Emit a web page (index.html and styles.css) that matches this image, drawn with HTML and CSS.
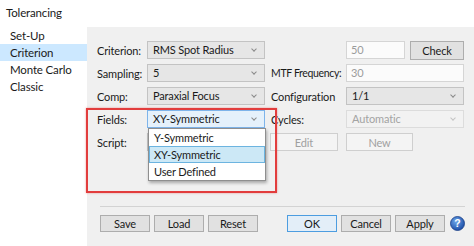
FILE: index.html
```html
<!DOCTYPE html>
<html lang="en">
<head>
    <meta charset="UTF-8">
    <meta name="viewport" content="width=device-width, initial-scale=1.0">
    <title>Tolerancing</title>
    <link rel="stylesheet" href="styles.css">
</head>
<body>
    <div class="window">
        <div class="title">Tolerancing</div>

        <div class="main">
            <ul class="nav">
                <li>Set-Up</li>
                <li class="active">Criterion</li>
                <li>Monte Carlo</li>
                <li>Classic</li>
            </ul>

            <div class="panel">
                <div class="form">
                    <label>Criterion:</label>
                    <div class="select">RMS Spot Radius<span class="arrow"></span></div>
                    <span></span>
                    <div class="pair">
                        <div class="textbox">50</div>
                        <button class="btn">Check</button>
                    </div>

                    <label>Sampling:</label>
                    <div class="select">5<span class="arrow"></span></div>
                    <label class="right tight">MTF Frequency:</label>
                    <div class="textbox">30</div>

                    <label>Comp:</label>
                    <div class="select">Paraxial Focus<span class="arrow"></span></div>
                    <label class="right">Configuration</label>
                    <div class="select">1/1<span class="arrow"></span></div>

                    <label>Fields:</label>
                    <div class="select open">XY-Symmetric<span class="arrow"></span></div>
                    <label class="right">Cycles:</label>
                    <div class="select disabled">Automatic<span class="arrow"></span></div>

                    <label>Script:</label>
                    <div class="select"><span class="arrow"></span></div>
                    <button class="btn disabled edit">Edit</button>
                    <button class="btn disabled new">New</button>
                </div>

                <div class="footer">
                    <div class="separator"></div>
                    <div class="buttons">
                        <button class="btn">Save</button>
                        <button class="btn">Load</button>
                        <button class="btn">Reset</button>
                        <div class="spacer"></div>
                        <button class="btn default">OK</button>
                        <button class="btn">Cancel</button>
                        <button class="btn">Apply</button>
                        <svg class="help" width="15" height="15" viewBox="0 0 15 15">
                            <defs>
                                <radialGradient id="hg" cx="40%" cy="35%" r="65%">
                                    <stop offset="0" stop-color="#6fa8ea"/>
                                    <stop offset="1" stop-color="#1d4fa8"/>
                                </radialGradient>
                            </defs>
                            <circle cx="7.5" cy="7.5" r="7" fill="url(#hg)" stroke="#1a3f87" stroke-width="0.8"/>
                            <text x="7.5" y="11.3" text-anchor="middle" font-family="Liberation Sans, sans-serif" font-weight="bold" font-size="10.5" fill="#fff">?</text>
                        </svg>
                    </div>
                </div>

                <!-- open combo list and annotation drawn over the form -->
                <ul class="dropdown">
                    <li>Y-Symmetric</li>
                    <li class="selected">XY-Symmetric</li>
                    <li>User Defined</li>
                </ul>
                <div class="highlight"></div>
            </div>
        </div>
    </div>
</body>
</html>
```

FILE: styles.css
```css
* {
    margin: 0;
    padding: 0;
    box-sizing: border-box;
}

body {
    font-family: 'Lato', 'Open Sans', sans-serif;
    font-size: 11px;
    letter-spacing: -0.15px;
    color: #1a1a1a;
    background: #fff;
    width: 474px;
    height: 246px;
    overflow: hidden;
}

.window {
    display: flex;
    flex-direction: column;
    height: 246px;
}

.title {
    height: 27px;
    padding: 6px 0 0 6px;
    font-size: 11.5px;
}

.main {
    flex: 1;
    display: flex;
}

/* Left list */
.nav {
    list-style: none;
    width: 87px;
}

.nav li {
    height: 17px;
    line-height: 17px;
    padding-left: 10px;
    font-size: 11.5px;
}

.nav li.active {
    background: #cce8ff;
}

/* Right panel */
.panel {
    flex: 1;
    background: #f0f0f0;
    display: flex;
    flex-direction: column;
    position: relative;
}

.form {
    display: grid;
    grid-template-columns: 50px 118px 81px 118px;
    grid-auto-rows: 18px;
    row-gap: 5px;
    margin: 14px 0 0 10px;
    align-items: center;
    white-space: nowrap;
}

.form label.right {
    padding-left: 6px;
}

.form label.tight {
    font-size: 10.5px;
    letter-spacing: -0.35px;
}

.select {
    height: 18px;
    border: 1px solid #c3c3c3;
    background: #e6e6e6;
    padding-left: 5px;
    line-height: 16px;
    position: relative;
}

.select .arrow {
    position: absolute;
    right: 8px;
    top: 5px;
    width: 4px;
    height: 4px;
    border-right: 1px solid #8a8a8a;
    border-bottom: 1px solid #8a8a8a;
    transform: rotate(45deg);
}

.select.open {
    background: #e5f1fb;
    border-color: #7eb4ea;
}

.select.disabled {
    background: #f2f2f2;
    border-color: #dcdcdc;
    color: #a3a3a3;
}

.select.disabled .arrow {
    border-color: #c4c4c4;
}

.textbox {
    height: 18px;
    border: 1px solid #d5d5d5;
    background: #fbfbfb;
    color: #9b9b9b;
    padding-left: 4px;
    line-height: 16px;
}

.pair {
    display: flex;
    gap: 5px;
    align-items: center;
}

.pair .textbox {
    width: 59px;
}

.pair .btn {
    width: 54px;
    height: 19px;
}

.btn {
    font-family: inherit;
    font-size: 11px;
    letter-spacing: inherit;
    color: #1a1a1a;
    height: 18px;
    border: 1px solid #adadad;
    background: #e1e1e1;
    padding: 0;
}

.btn.disabled {
    background: #f4f4f4;
    border-color: #cfcfcf;
    color: #a0a0a0;
}

.btn.edit {
    width: 68px;
    margin-left: 5px;
}

.btn.new {
    width: 67px;
}

.btn.default {
    border-color: #4d9de0;
    background: #e3eef8;
}

/* Bottom */
.footer {
    margin-top: auto;
    padding-bottom: 14px;
}

.separator {
    height: 1px;
    background: #d3d3d3;
    margin: 0 9px 0 13px;
}

.buttons {
    display: flex;
    align-items: center;
    gap: 4px;
    margin-top: 8px;
    padding-left: 13px;
}

.buttons .btn {
    width: 50px;
    height: 17px;
}

.spacer {
    flex: 1;
}

.help {
    margin: 0 9px 0 1px;
}

/* Open dropdown */
.dropdown {
    list-style: none;
    position: absolute;
    left: 61px;
    top: 101px;
    width: 118px;
    background: #fff;
    border: 1px solid #8f8f8f;
    box-shadow: 1px 2px 3px rgba(0, 0, 0, 0.3);
}

.dropdown li {
    height: 17px;
    line-height: 15px;
    padding-left: 4px;
    border: 1px solid transparent;
}

.dropdown li.selected {
    background: #cce8f6;
    border-color: #6cb4e0;
}

/* Red annotation box */
.highlight {
    position: absolute;
    left: -1px;
    top: 81px;
    width: 191px;
    height: 85px;
    border: 2px solid #e23d3d;
    box-shadow: 0 0 2px rgba(226, 61, 61, 0.5);
}
```
